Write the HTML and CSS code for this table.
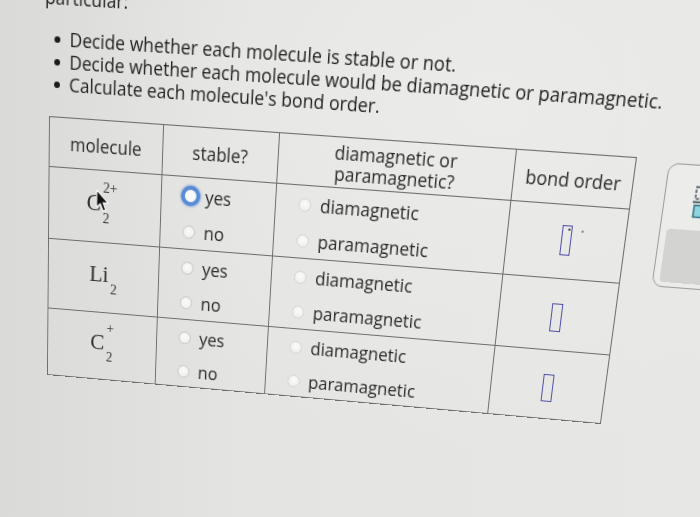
FILE: index.html
```html
<!DOCTYPE html>
<html lang="en">
<head>
<meta charset="utf-8">
<title>Molecule table</title>
<link rel="stylesheet" href="styles.css">
</head>
<body>
<div class="sheet">
  <p class="lead">particular:</p>
  <ul class="tasks">
    <li>Decide whether each molecule is stable or not.</li>
    <li>Decide whether each molecule would be diamagnetic or paramagnetic.</li>
    <li>Calculate each molecule's bond order.</li>
  </ul>
  <div class="work">
    <table class="grid">
      <colgroup>
        <col class="c-mol"><col class="c-stable"><col class="c-mag"><col class="c-bond">
      </colgroup>
      <tr class="head">
        <th>molecule</th>
        <th>stable?</th>
        <th>diamagnetic or<br>paramagnetic?</th>
        <th>bond order</th>
      </tr>
      <tr class="row">
        <td class="mol">
          <div class="molwrap first">
            <span class="chem">C<span class="ss"><span>2+</span><span>2</span></span></span>
            <svg class="cursor" width="15" height="23" viewBox="0 0 15 23"><path d="M1 1 L1 18 L5 14.2 L8 21 L10.8 19.8 L7.9 13.1 L13.3 13.1 Z" fill="#111" stroke="#f4f4f4" stroke-width="1.2" stroke-linejoin="round"/></svg>
          </div>
        </td>
        <td class="pick">
          <div class="opt"><span class="radio on"></span>yes</div>
          <div class="opt"><span class="radio"></span>no</div>
        </td>
        <td class="pick mag">
          <div class="opt"><span class="radio"></span>diamagnetic</div>
          <div class="opt"><span class="radio"></span>paramagnetic</div>
        </td>
        <td class="bond"><span class="box active"><span class="caret"></span></span><span class="speck"></span></td>
      </tr>
      <tr class="row">
        <td class="mol"><span class="chem">Li<span class="ss"><span>&nbsp;</span><span>2</span></span></span></td>
        <td class="pick">
          <div class="opt"><span class="radio"></span>yes</div>
          <div class="opt"><span class="radio"></span>no</div>
        </td>
        <td class="pick mag">
          <div class="opt"><span class="radio"></span>diamagnetic</div>
          <div class="opt"><span class="radio"></span>paramagnetic</div>
        </td>
        <td class="bond"><span class="box"></span></td>
      </tr>
      <tr class="row last">
        <td class="mol"><span class="chem">C<span class="ss"><span>+</span><span>2</span></span></span></td>
        <td class="pick">
          <div class="opt"><span class="radio"></span>yes</div>
          <div class="opt"><span class="radio"></span>no</div>
        </td>
        <td class="pick mag">
          <div class="opt"><span class="radio"></span>diamagnetic</div>
          <div class="opt"><span class="radio"></span>paramagnetic</div>
        </td>
        <td class="bond"><span class="box"></span></td>
      </tr>
    </table>
    <div class="palette">
      <div class="tool">
        <svg width="18" height="32" viewBox="0 0 18 32"><rect x="3" y="1.5" width="12" height="11" fill="none" stroke="#3d4a55" stroke-width="1.4" stroke-dasharray="3 1.5"/><line x1="1" y1="15.5" x2="17" y2="15.5" stroke="#3d4a55" stroke-width="1.6"/><rect x="3" y="18.5" width="12" height="11" fill="#8fd5df" stroke="#2f6f7c" stroke-width="1.4"/></svg>
      </div>
      <div class="well"></div>
    </div>
  </div>
</div>
</body>
</html>
```

FILE: styles.css
```css
html, body {
  margin: 0;
  padding: 0;
}

body {
  width: 700px;
  height: 517px;
  overflow: hidden;
  background:
    radial-gradient(ellipse at 70% 20%, #ebebe9 0%, rgba(235,235,233,0) 60%),
    linear-gradient(90deg, #dadad8 0%, #e4e4e2 35%, #e7e7e5 100%);
  font-family: "Open Sans", "DejaVu Sans", sans-serif;
  color: #2a2a2a;
}

.sheet {
  width: 780px;
  padding: 19px 0 0 60px;
  box-sizing: border-box;
  transform-origin: 0 0;
  transform: matrix3d(0.955675, 0.0589046, 0, -0.0000696951,
                      0.0029404, 1.0769192, 0, 0.000226231,
                      0, 0, 1, 0,
                      -8.75216, -38.30297, 0, 0.97250937);
}

.lead {
  margin: 0 0 0 -5px;
  font-size: 17.7px;
  line-height: 21px;
  height: 21px;
  color: #222;
}

.tasks {
  list-style: none;
  margin: 17px 0 0 4.6px;
  padding: 0;
  font-size: 17.7px;
  line-height: 21px;
  color: #1e1e1e;
}

.tasks li {
  display: flex;
  align-items: center;
  gap: 10px;
  white-space: nowrap;
}

.tasks li::before {
  content: "";
  flex: none;
  width: 6px;
  height: 6px;
  border-radius: 50%;
  background: #1a1a1a;
}

.work {
  display: flex;
  align-items: flex-start;
  gap: 31px;
  margin-top: 20px;
}

.grid {
  flex: none;
  width: 587px;
  height: 260px;
  border-collapse: collapse;
  table-layout: fixed;
  font-size: 17.5px;
}

.c-mol { width: 118px; }
.c-stable { width: 118px; }
.c-mag { width: 235px; }
.c-bond { width: 116px; }

.grid th,
.grid td {
  border: 1.4px solid #6c6c6c;
  padding: 0;
}

.grid th {
  font-weight: 400;
  text-align: center;
  vertical-align: middle;
  line-height: 20px;
}

.head { height: 48px; }
.row { height: 71px; }
.row.last { height: 70px; }

.grid td.mol {
  text-align: center;
  vertical-align: middle;
  padding-bottom: 7px;
}

.molwrap {
  position: relative;
  display: inline-block;
}

.molwrap.first {
  left: -3px;
}

.chem {
  display: inline-flex;
  align-items: center;
  font-family: "Liberation Serif", "Times New Roman", serif;
  font-size: 23px;
  line-height: 24px;
  color: #303030;
}

.ss {
  display: inline-flex;
  flex-direction: column;
  justify-content: space-between;
  height: 44px;
  margin-left: 2px;
  font-size: 14px;
  line-height: 14px;
  text-align: left;
}

.cursor {
  position: absolute;
  left: 10px;
  top: 8px;
}

.grid td.pick {
  vertical-align: top;
  padding: 7px 0 0 23px;
}

.opt {
  display: flex;
  align-items: center;
  gap: 9px;
  height: 22px;
  line-height: 22px;
}

.opt + .opt { margin-top: 13px; }

.radio {
  flex: none;
  width: 13px;
  height: 13px;
  box-sizing: border-box;
  border-radius: 50%;
  border: 1px solid #c3c3c1;
  background: radial-gradient(circle at 50% 40%, #fbfbfb 0%, #ececea 100%);
}

.mag .radio {
  border-color: #d2d2d0;
}

.radio.on {
  width: 20px;
  height: 20px;
  margin: 0 -3.5px;
  border: 4px solid #5a8bd7;
  background: #f8f8f7;
  box-shadow: 0 0 2px 1px rgba(100, 145, 215, 0.45);
}

.bond {
  text-align: center;
  vertical-align: middle;
  position: relative;
}

.box {
  display: inline-block;
  position: relative;
  top: 3px;
  width: 11px;
  height: 28px;
  box-sizing: border-box;
  border: 1.6px solid #4f4fa8;
  vertical-align: middle;
}

.box.active {
  top: -2px;
  width: 10px;
  height: 29px;
}

.caret {
  position: absolute;
  right: 1px;
  top: 2px;
  width: 2px;
  height: 2px;
  background: #444;
}

.speck {
  position: absolute;
  left: 72px;
  top: 23px;
  width: 2px;
  height: 2px;
  border-radius: 50%;
  background: #666;
}

.palette {
  flex: none;
  width: 90px;
  height: 117px;
  margin-top: 2.5px;
  box-sizing: border-box;
  border: 1.6px solid #9c9c9a;
  border-radius: 10px;
  background: #ececea;
  display: flex;
  flex-direction: column;
  padding: 0 0 4px 6px;
}

.tool {
  height: 60px;
  padding: 18px 0 0 20px;
  box-sizing: border-box;
}

.well {
  flex: 1;
  border-radius: 4px 0 0 4px;
  background: #d3d3d1;
}
```
